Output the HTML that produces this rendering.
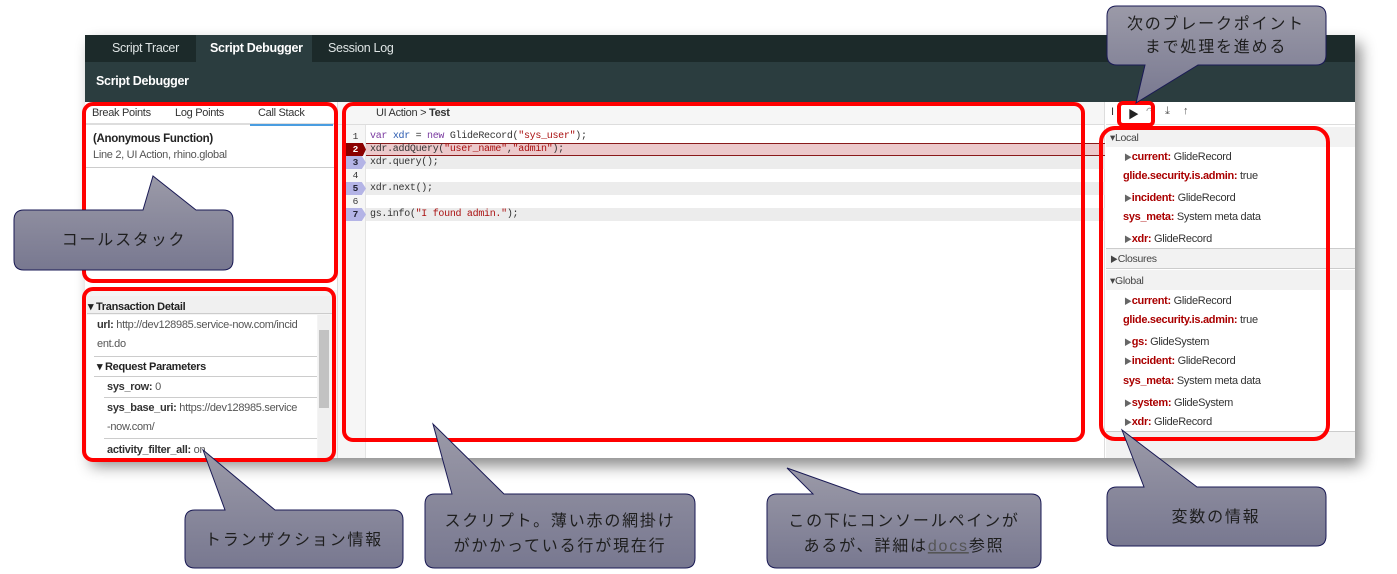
<!DOCTYPE html>
<html><head><meta charset="utf-8"><style>
*{margin:0;padding:0;box-sizing:border-box}
body{width:1397px;height:574px;background:#fff;position:relative;overflow:hidden;font-family:"Liberation Sans","Noto Sans CJK JP",sans-serif;font-size:11px;color:#333}
.a{position:absolute}
.app{left:85px;top:35px;width:1270px;height:423px;background:#fff;box-shadow:6px 8px 14px rgba(0,0,0,.45)}
.t{position:absolute;white-space:nowrap;letter-spacing:-0.3px}
.mono{font-family:"Liberation Mono",monospace;font-size:10px;letter-spacing:-0.3px}
.k{color:#a00;font-weight:bold}
.row{position:absolute;left:366px;width:739px;height:13px}
.ln{position:absolute;left:345px;width:21px;height:13px;font-family:"Liberation Mono",monospace;font-size:9.5px;line-height:13px;text-align:center}
.bp{background:#b4b4e6;clip-path:polygon(0 0,80% 0,100% 50%,80% 100%,0 100%);font-weight:bold;color:#223}
</style></head><body>
<div class="a app"></div>
<div class="a" style="left:85px;top:35px;width:1270px;height:27px;background:#1c2a2a"></div>
<div class="a" style="left:196px;top:35px;width:116px;height:27px;background:#2b3d3f"></div>
<div class="t" style="left:112px;top:41px;color:#dfe5e5;font-size:12.5px">Script Tracer</div>
<div class="t" style="left:210px;top:41px;color:#fff;font-size:12.5px;font-weight:bold">Script Debugger</div>
<div class="t" style="left:328px;top:41px;color:#dfe5e5;font-size:12.5px">Session Log</div>
<div class="a" style="left:85px;top:62px;width:1270px;height:40px;background:#2b3d3f"></div>
<div class="t" style="left:96px;top:74px;color:#fff;font-size:12.5px;font-weight:bold">Script Debugger</div>
<div class="a" style="left:85px;top:102px;width:252px;height:23px;background:#fff;border-bottom:2px solid #ddd"></div>
<div class="t" style="left:92px;top:107px;font-size:11px">Break Points</div>
<div class="t" style="left:175px;top:107px;font-size:11px">Log Points</div>
<div class="t" style="left:258px;top:107px;font-size:11px">Call Stack</div>
<div class="a" style="left:250px;top:124px;width:83px;height:2px;background:#4a9de0"></div>
<div class="t" style="left:93px;top:133px;font-size:11.5px;font-weight:bold;color:#222">(Anonymous Function)</div>
<div class="t" style="left:93px;top:149px;font-size:11px;color:#555">Line 2, UI Action, rhino.global</div>
<div class="a" style="left:85px;top:167px;width:252px;height:1px;background:#ccc"></div>
<div class="a" style="left:85px;top:290px;width:252px;height:168px;background:#f4f4f4"></div>
<div class="a" style="left:87px;top:296px;width:247px;height:18px;background:#f0f0f0;border-bottom:1px solid #ccc"></div>
<div class="t" style="left:88px;top:300px;font-size:11px;font-weight:bold;color:#222">▾ Transaction Detail</div>
<div class="a" style="left:87px;top:315px;width:230px;height:143px;background:#fff"></div>
<div class="a" style="left:318px;top:315px;width:12px;height:143px;background:#f0f0f0"></div>
<div class="a" style="left:319px;top:330px;width:10px;height:78px;background:#c2c2c2"></div>
<div class="t" style="left:97px;top:319px;font-size:11px"><b>url:</b> <span style="color:#555">http://dev128985.service-now.com/incid</span></div>
<div class="t" style="left:97px;top:338px;font-size:11px;color:#555">ent.do</div>
<div class="a" style="left:94px;top:356px;width:223px;height:1px;background:#ccc"></div>
<div class="t" style="left:97px;top:360px;font-size:11px;font-weight:bold;color:#222">▾ Request Parameters</div>
<div class="a" style="left:94px;top:376px;width:223px;height:1px;background:#ccc"></div>
<div class="t" style="left:107px;top:381px;font-size:11px"><b>sys_row:</b> <span style="color:#555">0</span></div>
<div class="a" style="left:104px;top:397px;width:213px;height:1px;background:#ccc"></div>
<div class="t" style="left:107px;top:402px;font-size:11px"><b>sys_base_uri:</b> <span style="color:#555">https://dev128985.service</span></div>
<div class="t" style="left:107px;top:421px;font-size:11px;color:#555">-now.com/</div>
<div class="a" style="left:104px;top:438px;width:213px;height:1px;background:#ccc"></div>
<div class="t" style="left:107px;top:444px;font-size:11px"><b>activity_filter_all:</b> <span style="color:#555">on</span></div>
<div class="a" style="left:337px;top:102px;width:768px;height:356px;border-left:1px solid #ddd;border-right:1px solid #ddd"></div>
<div class="a" style="left:338px;top:102px;width:766px;height:23px;background:#f6f6f6;border-bottom:1px solid #ddd"></div>
<div class="t" style="left:376px;top:107px;font-size:11px">UI Action &gt; <b>Test</b></div>
<div class="a" style="left:338px;top:125px;width:28px;height:333px;background:#f6f6f6;border-right:1px solid #e4e4e4"></div>
<div class="row" style="top:143px;background:#ecc9cb;border-top:1px solid #8a1a1a;border-bottom:1px solid #8a1a1a"></div>
<div class="row" style="top:156px;background:#ececec"></div>
<div class="row" style="top:182px;background:#ececec"></div>
<div class="row" style="top:208px;background:#ececec"></div>
<div class="ln" style="top:130px">1</div>
<div class="ln" style="top:143px;background:#8b0000;color:#fff;font-weight:bold;clip-path:polygon(0 0,85% 0,100% 50%,85% 100%,0 100%)">2</div>
<div class="ln bp" style="top:156px">3</div>
<div class="ln" style="top:169px">4</div>
<div class="ln bp" style="top:182px">5</div>
<div class="ln" style="top:195px">6</div>
<div class="ln bp" style="top:208px">7</div>
<div class="t mono" style="left:370px;top:130px;line-height:13px"><span style="color:#7a3aa0">var</span> <span style="color:#2a5ab0">xdr</span> = <span style="color:#7a3aa0">new</span> GlideRecord(<span style="color:#a11">"sys_user"</span>);</div>
<div class="t mono" style="left:370px;top:143px;line-height:13px">xdr.addQuery(<span style="color:#a11">"user_name"</span>,<span style="color:#a11">"admin"</span>);</div>
<div class="t mono" style="left:370px;top:156px;line-height:13px">xdr.query();</div>
<div class="t mono" style="left:370px;top:182px;line-height:13px">xdr.next();</div>
<div class="t mono" style="left:370px;top:208px;line-height:13px">gs.info(<span style="color:#a11">"I found admin."</span>);</div>
<div class="a" style="left:1106px;top:102px;width:249px;height:23px;background:#fff;border-bottom:1px solid #ddd"></div>
<div class="t" style="left:1111px;top:106px;font-size:11px;color:#333">I</div>
<div class="t" style="left:1128px;top:106px;font-size:11px;color:#222">▶</div>
<div class="t" style="left:1146px;top:105px;font-size:11px;color:#999">↷</div>
<div class="t" style="left:1165px;top:105px;font-size:11px;color:#555">⤓</div>
<div class="t" style="left:1183px;top:105px;font-size:11px;color:#555">↑</div>
<div class="a" style="left:1106px;top:127px;width:249px;height:20px;background:#f2f2f2"></div>
<div class="t" style="left:1110px;top:132px;font-size:10.5px;color:#444">▾Local</div>
<div class="t" style="left:1124px;top:151px;font-size:11px"><span style="color:#666;font-size:8px">▶</span><span class="k">current:</span> GlideRecord</div>
<div class="t" style="left:1123px;top:170px;font-size:11px"><span class="k">glide.security.is.admin:</span> true</div>
<div class="t" style="left:1124px;top:192px;font-size:11px"><span style="color:#666;font-size:8px">▶</span><span class="k">incident:</span> GlideRecord</div>
<div class="t" style="left:1123px;top:211px;font-size:11px"><span class="k">sys_meta:</span> System meta data</div>
<div class="t" style="left:1124px;top:233px;font-size:11px"><span style="color:#666;font-size:8px">▶</span><span class="k">xdr:</span> GlideRecord</div>
<div class="a" style="left:1106px;top:248px;width:249px;height:21px;background:#f2f2f2;border-top:1px solid #ccc;border-bottom:1px solid #ccc"></div>
<div class="t" style="left:1110px;top:253px;font-size:10.5px;color:#444"><span style="font-size:8px">▶</span>Closures</div>
<div class="a" style="left:1106px;top:270px;width:249px;height:20px;background:#f2f2f2"></div>
<div class="t" style="left:1110px;top:275px;font-size:10.5px;color:#444">▾Global</div>
<div class="t" style="left:1124px;top:295px;font-size:11px"><span style="color:#666;font-size:8px">▶</span><span class="k">current:</span> GlideRecord</div>
<div class="t" style="left:1123px;top:314px;font-size:11px"><span class="k">glide.security.is.admin:</span> true</div>
<div class="t" style="left:1124px;top:336px;font-size:11px"><span style="color:#666;font-size:8px">▶</span><span class="k">gs:</span> GlideSystem</div>
<div class="t" style="left:1124px;top:355px;font-size:11px"><span style="color:#666;font-size:8px">▶</span><span class="k">incident:</span> GlideRecord</div>
<div class="t" style="left:1123px;top:375px;font-size:11px"><span class="k">sys_meta:</span> System meta data</div>
<div class="t" style="left:1124px;top:397px;font-size:11px"><span style="color:#666;font-size:8px">▶</span><span class="k">system:</span> GlideSystem</div>
<div class="t" style="left:1124px;top:416px;font-size:11px"><span style="color:#666;font-size:8px">▶</span><span class="k">xdr:</span> GlideRecord</div>
<div class="a" style="left:1106px;top:431px;width:249px;height:27px;background:#f2f2f2;border-top:1px solid #ccc"></div>

<svg class="a" style="left:0;top:0" width="1397" height="574" font-family="'Liberation Sans','Noto Sans CJK JP',sans-serif">
<defs><linearGradient id="g" x1="0" y1="0" x2="0" y2="1"><stop offset="0" stop-color="#9b9aa8"/><stop offset="1" stop-color="#787890"/></linearGradient></defs>
<g fill="none" stroke="#f00" stroke-width="4">
<rect x="84" y="104" width="252" height="177" rx="9"/>
<rect x="84" y="289" width="250" height="171" rx="9"/>
<rect x="344" y="104" width="739" height="336" rx="9"/>
<rect x="1101" y="128" width="227" height="311" rx="14"/>
<rect x="1119" y="103" width="34" height="22" rx="4"/>
</g>
<g fill="url(#g)" stroke="#1a1a55" stroke-width="1">
<path d="M24,210 H143 L153,176 L196,210 H223 Q233,210 233,220 V260 Q233,270 223,270 H24 Q14,270 14,260 V220 Q14,210 24,210 Z"/>
<path d="M195,510 H225 L203,450 L275,510 H393 Q403,510 403,520 V558 Q403,568 393,568 H195 Q185,568 185,558 V520 Q185,510 195,510 Z"/>
<path d="M435,494 H452 L433,424 L504,494 H685 Q695,494 695,504 V558 Q695,568 685,568 H435 Q425,568 425,558 V504 Q425,494 435,494 Z"/>
<path d="M777,494 H813 L787,468 L860,494 H1031 Q1041,494 1041,504 V558 Q1041,568 1031,568 H777 Q767,568 767,558 V504 Q767,494 777,494 Z"/>
<path d="M1117,487 H1144 L1122,430 L1197,487 H1316 Q1326,487 1326,497 V536 Q1326,546 1316,546 H1117 Q1107,546 1107,536 V497 Q1107,487 1117,487 Z"/>
<path d="M1117,6 H1316 Q1326,6 1326,16 V55 Q1326,65 1316,65 H1198 L1136,103 L1145,65 H1117 Q1107,65 1107,55 V16 Q1107,6 1117,6 Z"/>
</g>
<g fill="#1e1e1e" font-size="16" text-anchor="middle" letter-spacing="1.8">
<text x="124" y="245">コールスタック</text>
<text x="294" y="545">トランザクション情報</text>
<text x="560" y="526">スクリプト。薄い赤の網掛け</text>
<text x="560" y="551">がかかっている行が現在行</text>
<text x="904" y="526">この下にコンソールペインが</text>
<text x="904" y="551">あるが、詳細は<tspan fill="#555" text-decoration="underline">docs</tspan>参照</text>
<text x="1216" y="522">変数の情報</text>
<text x="1216" y="29">次のブレークポイント</text>
<text x="1216" y="52">まで処理を進める</text>
</g>
</svg>
</body></html>
